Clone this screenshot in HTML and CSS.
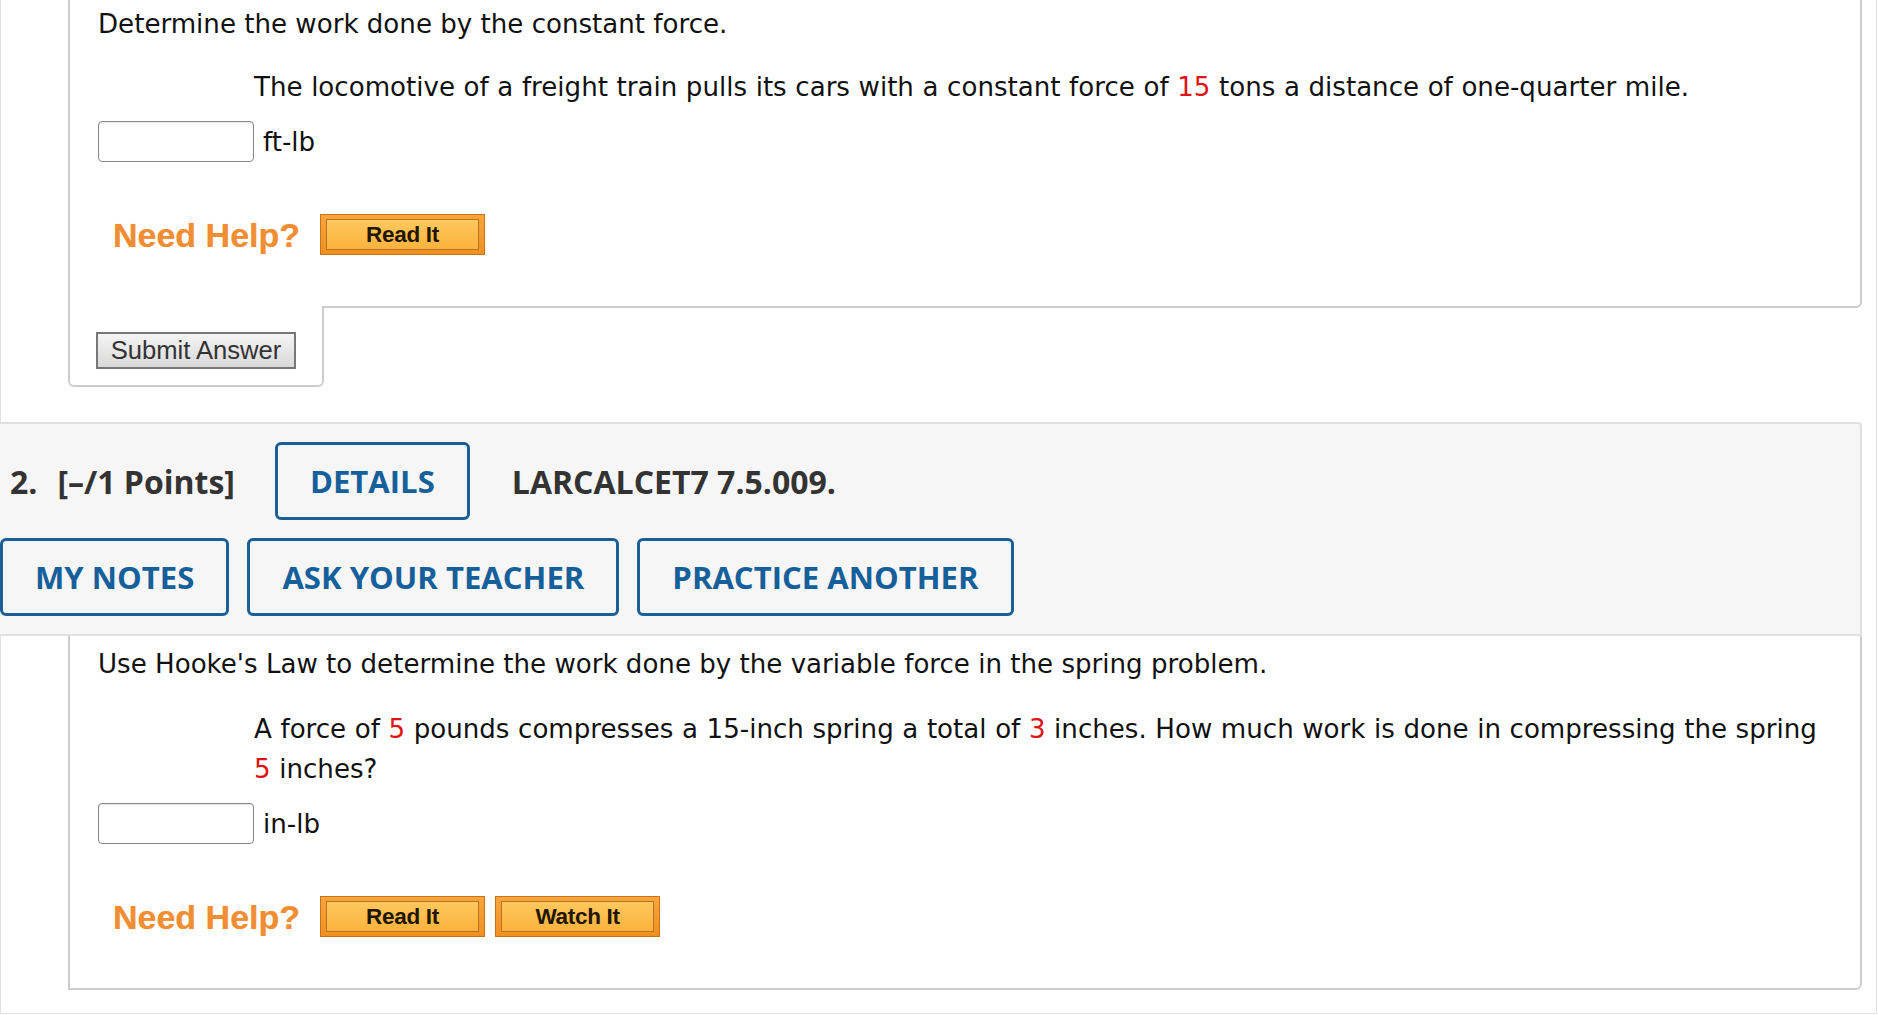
FILE: index.html
```html
<!DOCTYPE html>
<html lang="en">
<head>
    <meta charset="UTF-8">
    <meta name="viewport" content="width=device-width, initial-scale=1.0">
    <title>Assignment</title>
    <link rel="stylesheet" href="styles.css">
</head>
<body>
    <div class="page">
        <!-- question 1 (scrolled, top cut off) -->
        <div class="qbody first">
            <p class="lead">Determine the work done by the constant force.</p>
            <p class="problem">The locomotive of a freight train pulls its cars with a constant force of <span class="num">15</span> tons a distance of one-quarter mile.</p>
            <div class="answer">
                <input type="text" class="ans">
                <span class="unit">ft-lb</span>
            </div>
            <div class="help">
                <span class="need">Need Help?</span>
                <a href="#" class="help-btn"><span>Read It</span></a>
            </div>
        </div>
        <div class="submit-tab">
            <button type="button" class="submit">Submit Answer</button>
        </div>

        <!-- question 2 -->
        <div class="question">
            <div class="qhead">
                <div class="qrow">
                    <span class="qnum">2.</span>
                    <span class="qpts">[–/1 Points]</span>
                    <a href="#" class="qbtn">DETAILS</a>
                    <span class="qcode">LARCALCET7 7.5.009.</span>
                </div>
                <div class="qrow tools">
                    <a href="#" class="qbtn">MY NOTES</a>
                    <a href="#" class="qbtn">ASK YOUR TEACHER</a>
                    <a href="#" class="qbtn">PRACTICE ANOTHER</a>
                </div>
            </div>
            <div class="qbody last">
                <p class="lead">Use Hooke's Law to determine the work done by the variable force in the spring problem.</p>
                <p class="problem">A force of <span class="num">5</span> pounds compresses a 15-inch spring a total of <span class="num">3</span> inches. How much work is done in compressing the spring <span class="num">5</span> inches?</p>
                <div class="answer">
                    <input type="text" class="ans">
                    <span class="unit">in-lb</span>
                </div>
                <div class="help">
                    <span class="need">Need Help?</span>
                    <a href="#" class="help-btn"><span>Read It</span></a>
                    <a href="#" class="help-btn"><span>Watch It</span></a>
                </div>
            </div>
        </div>
    </div>
</body>
</html>
```

FILE: styles.css
```css
/* reset */
* {box-sizing: border-box;}
body, p {margin: 0; padding: 0;}
a {text-decoration: none;}
body {background: #fff; color: #111;
    font-family: "DejaVu Sans", Verdana, sans-serif;}

/* page frame */
.page {margin-right: 1px; padding: 0 14px 23px 0;
    border-left: 1px solid #e2e2e2;
    border-right: 1px solid #e2e2e2;
    border-bottom: 1px solid #e2e2e2;}

/* question body */
.qbody {margin-left: 67px; padding: 8px 40px 51px 28px;
    border: 2px solid #cdcdcd; border-top: none;
    font-size: 26.1px; line-height: 40px;}
.qbody.first {margin-top: -6px; border-top: 2px solid #cdcdcd;
    border-radius: 0 0 6px 0;}
.qbody.last {border-radius: 0 0 6px 0;}
.lead {margin-bottom: 23px;}
.qbody.last .lead {margin-bottom: 25px;}
.problem {padding-left: 156px; word-spacing: 0.3px;}
.num {color: #dd1515;}

/* answer input */
.answer {display: flex; align-items: center; margin-top: 14px;}
.ans {width: 156px; height: 41px; margin: 0;
    border: 1px solid #8a8a8a; border-radius: 4px;
    box-shadow: inset 0 1px 2px rgba(0,0,0,.12);
    background: #fff;}
.unit {margin-left: 9px;}

/* need help */
.help {display: flex; align-items: center; gap: 10px; margin-top: 52px; padding-left: 15px;}
.need {margin-right: 10px;
    font-family: "Liberation Sans", Arial, sans-serif; font-weight: bold;
    font-size: 34px; line-height: 40px; color: #f18d32;
    text-shadow: 0 0 1px rgba(240,138,44,.5);}
.help-btn {display: block; width: 165px; height: 41px; padding: 4px 5px;
    border: 1px solid #c9721c;
    background: linear-gradient(#f8a53c, #f0901f);}
.help-btn span {display: flex; justify-content: center; align-items: center;
    height: 100%;
    border: 1px solid #b97324;
    background: linear-gradient(#fec85e, #fbb23c);
    font-family: "Liberation Sans", Arial, sans-serif; font-weight: bold;
    font-size: 22.5px; color: #221603; letter-spacing: -0.3px;}

/* submit tab */
.submit-tab {position: relative; width: 256px; margin: -2px 0 0 67px;
    padding: 26px 26px 16px;
    background: #fff;
    border: 2px solid #cdcdcd; border-top: none;
    border-radius: 0 0 6px 6px;}
.submit {display: block; width: 200px; height: 37px; padding: 0;
    border: 2px solid #777;
    background: linear-gradient(#f4f4f4, #d9d9d9);
    font-family: "Liberation Sans", Arial, sans-serif;
    font-size: 25.6px; color: #333;}

/* question header */
.question {margin-top: 35px;}
.qhead {display: flex; flex-direction: column; gap: 18px;
    margin-left: -1px; padding: 18px 0;
    background: #f6f6f6;
    border: 2px solid #e0e0e0; border-left: none;
    border-radius: 0 4px 0 0;
    font-family: "Open Sans", sans-serif; font-weight: bold; font-size: 31.1px;}
.qrow {display: flex; align-items: center;}
.qnum {margin-left: 10px; margin-right: 20px; color: #333; font-size: 32px;}
.qpts {margin-right: 40px; color: #333; font-size: 32px;}
.qcode {margin-left: 42px; color: #333; font-size: 32px;}
.qbtn {display: flex; align-items: center; height: 78px; padding: 0 32px;
    border: 3px solid #1a5f96; border-radius: 6px;
    color: #15609a;}
.tools {gap: 18px;}
```
